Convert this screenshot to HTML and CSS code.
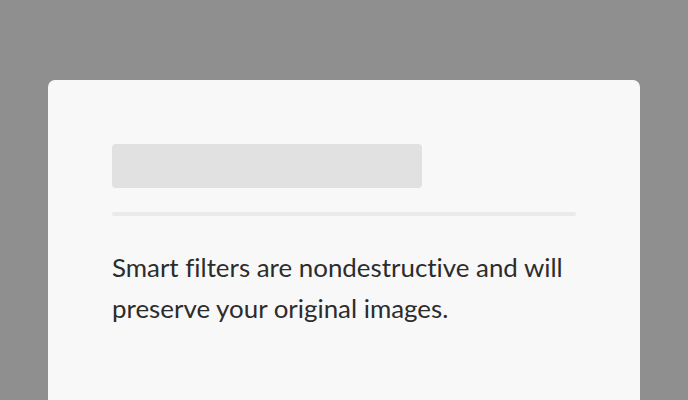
FILE: index.html
```html
<!DOCTYPE html>
<html lang="en">
<head>
<meta charset="utf-8">
<link rel="stylesheet" href="styles.css">
</head>
<body>
<div class="page">
  <div class="card">
    <div class="placeholder"></div>
    <div class="divider"></div>
    <p class="body">Smart filters are nondestructive and will preserve your original images.</p>
  </div>
</div>
</body>
</html>
```
FILE: styles.css
```css
html, body {
  margin: 0;
  padding: 0;
  width: 688px;
  height: 400px;
  overflow: hidden;
  background: #8f8f8f;
}
.page {
  padding: 80px 48px 0 48px;
}
.card {
  background: #f8f8f8;
  border-radius: 7px 7px 0 0;
  padding: 64px 64px 0 64px;
  height: 320px;
  box-sizing: border-box;
}
.placeholder {
  width: 310px;
  height: 44px;
  background: #e1e1e1;
  border-radius: 4px;
}
.divider {
  margin-top: 24px;
  height: 4px;
  border-radius: 2px;
  background: #eaeaea;
}
.body {
  margin: 31px 0 0 0;
  font-family: Lato, "Liberation Sans", sans-serif;
  font-size: 25.9px;
  line-height: 41px;
  color: #2c2c2c;
  font-variant-ligatures: no-common-ligatures;
}
```
